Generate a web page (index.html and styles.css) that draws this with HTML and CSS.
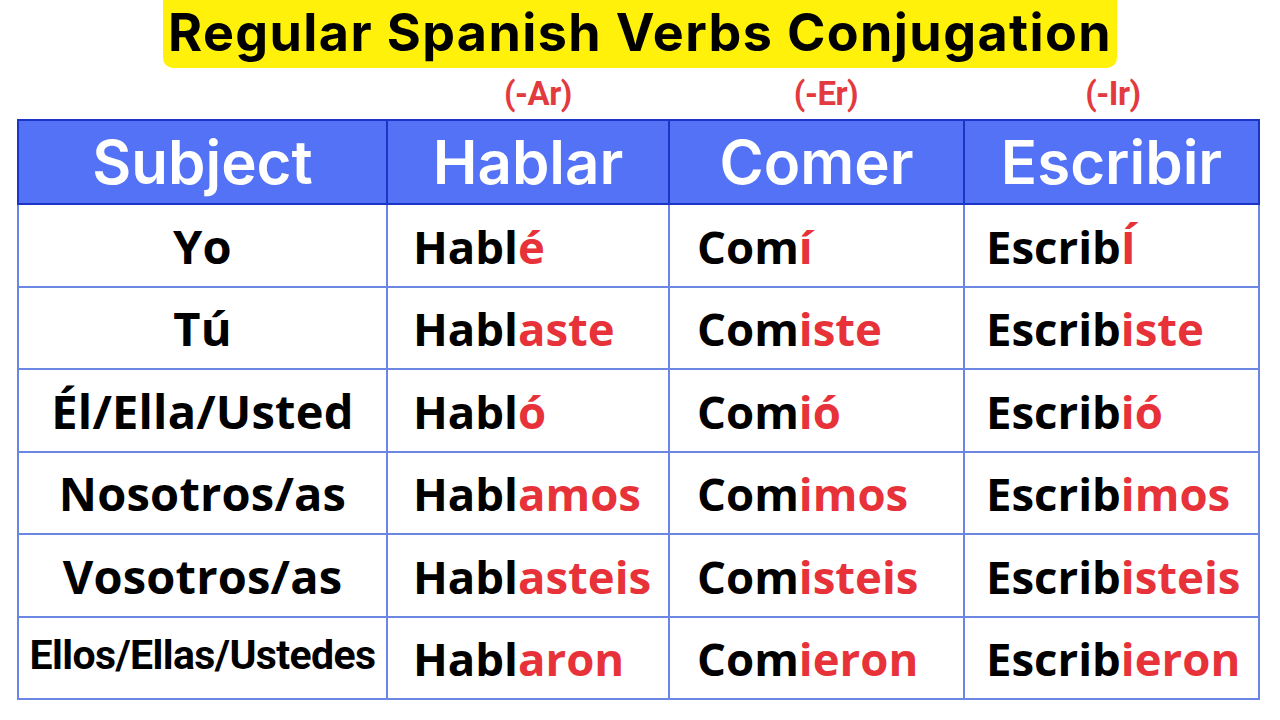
FILE: index.html
```html
<!DOCTYPE html>
<html>
<head>
<meta charset="utf-8">
<link rel="stylesheet" href="styles.css">
</head>
<body>
<div class="page">
  <div class="title-wrap"><h1 class="title">Regular Spanish Verbs Conjugation</h1></div>
  <div class="labels">
    <div class="label-spacer"></div>
    <div class="label lab-ar">(-Ar)</div>
    <div class="label lab-er">(-Er)</div>
    <div class="label lab-ir">(-Ir)</div>
  </div>
  <table class="conj">
    <colgroup>
      <col class="c1"><col class="c2"><col class="c3"><col class="c4">
    </colgroup>
    <thead>
      <tr><th>Subject</th><th>Hablar</th><th>Comer</th><th>Escribir</th></tr>
    </thead>
    <tbody>
      <tr><td class="subj">Yo</td><td class="v2">Habl<span class="end">é</span></td><td class="v3">Com<span class="end">í</span></td><td class="v4">Escrib<span class="end">Í</span></td></tr>
      <tr><td class="subj">Tú</td><td class="v2">Habl<span class="end">aste</span></td><td class="v3">Com<span class="end">iste</span></td><td class="v4">Escrib<span class="end">iste</span></td></tr>
      <tr><td class="subj">Él/Ella/Usted</td><td class="v2">Habl<span class="end">ó</span></td><td class="v3">Com<span class="end">ió</span></td><td class="v4">Escrib<span class="end">ió</span></td></tr>
      <tr><td class="subj">Nosotros/as</td><td class="v2">Habl<span class="end">amos</span></td><td class="v3">Com<span class="end">imos</span></td><td class="v4">Escrib<span class="end">imos</span></td></tr>
      <tr><td class="subj">Vosotros/as</td><td class="v2">Habl<span class="end">asteis</span></td><td class="v3">Com<span class="end">isteis</span></td><td class="v4">Escrib<span class="end">isteis</span></td></tr>
      <tr><td class="subj small">Ellos/Ellas/Ustedes</td><td class="v2">Habl<span class="end">aron</span></td><td class="v3">Com<span class="end">ieron</span></td><td class="v4">Escrib<span class="end">ieron</span></td></tr>
    </tbody>
  </table>
</div>
</body>
</html>
```
FILE: styles.css
```css
* { box-sizing: border-box; }
html, body { margin: 0; padding: 0; background: #ffffff; }
body { width: 1280px; height: 720px; overflow: hidden; }

.page {
  display: flex;
  flex-direction: column;
  align-items: flex-start;
}

.title-wrap {
  align-self: center;
  display: flex;
  justify-content: center;
}
.title {
  margin: 0;
  background: #fff10a;
  border-radius: 0 0 10px 10px;
  width: 954px;
  height: 68px;
  font-family: Inter, "Liberation Sans", sans-serif;
  font-weight: 700;
  font-size: 52px;
  line-height: 66px;
  letter-spacing: 1.4px;
  text-align: center;
  color: #000;
}

.labels {
  display: flex;
  height: 51px;
  margin-left: 17px;
  align-items: center;
}
.label-spacer { width: 369px; }
.label {
  font-family: Roboto, "Liberation Sans", sans-serif;
  font-weight: 700;
  font-size: 33px;
  color: #e23a3f;
  text-align: center;
  letter-spacing: -0.5px;
}
.lab-ar { width: 304px; }
.lab-er { width: 272px; }
.lab-ir { width: 302px; }

.conj {
  margin-left: 17px;
  border-collapse: collapse;
  width: 1241px;
  table-layout: fixed;
}
.c1 { width: 369px; }
.c2 { width: 282px; }
.c3 { width: 295px; }
.c4 { width: 295px; }

.conj th {
  background: #5472f6;
  color: #fff;
  border: 2px solid #1c35c4;
  height: 84px;
  padding: 0;
  font-family: Inter, "Liberation Sans", sans-serif;
  font-weight: 600;
  font-size: 60px;
  text-align: center;
  vertical-align: middle;
}

.conj td {
  border: 2px solid #6c86e4;
  height: 82.5px;
  padding: 2px 0 0 0;
  font-family: "Open Sans", sans-serif;
  font-weight: 700;
  font-size: 45.5px;
  line-height: 1;
  color: #000;
  vertical-align: middle;
  white-space: nowrap;
}
.conj td.subj {
  text-align: center;
  font-size: 47px;
  letter-spacing: 0.2px;
}
.conj td.subj.small {
  font-family: Roboto, sans-serif;
  font-size: 41px;
  letter-spacing: -0.6px;
  padding-top: 0;
  padding-bottom: 4px;
}
.v2 { padding-left: 25px !important; }
.v3 { padding-left: 27px !important; }
.v4 { padding-left: 21px !important; }
.end { color: #e7323a; }
```
